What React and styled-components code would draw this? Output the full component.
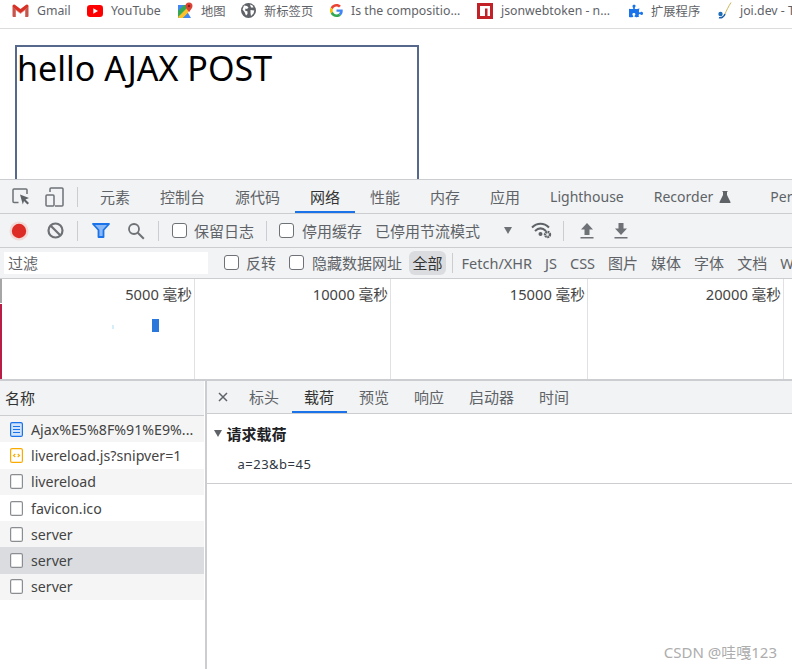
import React from 'react';
import styled, { createGlobalStyle } from 'styled-components';
import { FaPuzzlePiece } from 'react-icons/fa';

const GlobalStyle = createGlobalStyle`
    html, body {
        margin: 0;
        padding: 0;
        background: #fff;
        overflow: hidden;
    }
    * {
        box-sizing: border-box;
    }
`

const SANS = `"Noto Sans", "Noto Sans CJK SC", sans-serif`;

const Window = styled.div`
    width: 792px;
    height: 669px;
    display: flex;
    flex-direction: column;
    position: relative;
    overflow: hidden;
    font-family: ${SANS};
    color: #5f6368;
`

const BookmarkBar = styled.div`
    height: 29px;
    flex: none;
    display: flex;
    align-items: center;
    padding-bottom: 7px;
    border-bottom: 1px solid #dcdcdc;
    white-space: nowrap;
    overflow: hidden;
`

const Bookmark = styled.div`
    flex: none;
    width: ${props => props.$width}px;
    padding-left: ${props => props.$pad}px;
    display: flex;
    align-items: center;
    gap: 8px;
    font-size: 12.3px;
    color: #5f6368;

    svg {
        flex: none;
    }
`

const Page = styled.div`
    height: 150px;
    flex: none;
    padding: 16px 0 0 15px;
    overflow: hidden;
`

const DemoBox = styled.div`
    width: 404px;
    height: 220px;
    border: 2px solid #56688c;
    font-size: 34px;
    line-height: 42px;
    color: #000;
`

const Devtools = styled.div`
    flex: 1;
    min-height: 0;
    display: flex;
    flex-direction: column;
    border-top: 1px solid #cbcdd1;
`

const MainTabs = styled.div`
    height: 34px;
    flex: none;
    display: flex;
    align-items: stretch;
    background: #f1f3f4;
    border-bottom: 1px solid #cbcdd1;
    overflow: hidden;
`

const IconSlot = styled.div`
    flex: none;
    width: ${props => props.$width}px;
    padding-left: ${props => props.$pad || 0}px;
    display: flex;
    align-items: center;
    justify-content: center;
`

const Separator = styled.div`
    flex: none;
    width: 1px;
    height: ${props => props.$height || 20}px;
    background: #cbcdd1;
    margin: 0 ${props => props.$right || 0}px 0 ${props => props.$left || 0}px;
    align-self: center;
`

const MainTab = styled.div`
    flex: none;
    padding: 0 15px;
    display: flex;
    align-items: center;
    font-size: ${props => props.$latin ? 14 : 15}px;
    gap: 6px;
    white-space: nowrap;
    color: ${props => props.$active ? '#333' : '#5f6368'};
    box-shadow: ${props => props.$active ? 'inset 0 -2px 0 #1a73e8' : 'none'};
`

const ClippedTab = styled(MainTab)`
    margin-left: 9px;
    padding-right: 0;
`

const Toolbar = styled.div`
    height: 34px;
    flex: none;
    display: flex;
    align-items: center;
    background: #f1f3f4;
    border-bottom: 1px solid #cbcdd1;
    font-size: 15px;
    white-space: nowrap;
`

const FilterBar = styled(Toolbar)`
    height: 31px;
    padding-bottom: 1px;
    overflow: hidden;
`

const FilterInput = styled.div`
    flex: none;
    width: 204px;
    height: 22px;
    margin: 0 16px 0 4px;
    padding-left: 4px;
    display: flex;
    align-items: center;
    background: #fff;
    color: #5f6368;
`

const Check = styled.label`
    flex: none;
    display: flex;
    align-items: center;
    gap: ${props => props.$gap || 7}px;
    margin-left: ${props => props.$left || 0}px;
    margin-right: ${props => props.$right || 0}px;
`

const CheckBox = styled.span`
    flex: none;
    width: 15px;
    height: 15px;
    border: 1.5px solid #6e7175;
    border-radius: 3px;
    background: #fff;
`

const Chip = styled.div`
    flex: none;
    padding: 0 ${props => props.$active ? 3.5 : 6.5}px;
    height: 24px;
    display: flex;
    align-items: center;
    border-radius: 6px;
    font-size: ${props => props.$latin ? 14.5 : 15}px;
    background: ${props => props.$active ? '#dadce0' : 'transparent'};
    color: ${props => props.$active ? '#333' : '#5f6368'};

    &:last-child {
        padding-right: 0;
    }
`

const Overview = styled.div`
    height: 102px;
    flex: none;
    display: flex;
    position: relative;
    border-bottom: 2px solid #cbcdd1;
    padding-left: 2px;
`

const StripGray = styled.div`
    position: absolute;
    left: 0;
    top: 0;
    width: 2px;
    height: 24px;
    background: #a6a6a6;
`

const StripRed = styled.div`
    position: absolute;
    left: 0;
    top: 25px;
    width: 2px;
    height: 75px;
    background: #b81d45;
`

const TimeCell = styled.div`
    flex: none;
    width: ${props => props.$width}px;
    padding: 5px 2px 0 0;
    text-align: right;
    font-size: 14.7px;
    line-height: 20px;
    color: #444;
    border-right: 1px solid #dfe1e5;
`

const RequestMark = styled.div`
    position: absolute;
    left: ${props => props.$left}px;
    top: ${props => props.$top}px;
    width: ${props => props.$width}px;
    height: ${props => props.$height}px;
    background: ${props => props.$color};
`

const Panes = styled.div`
    flex: 1;
    min-height: 0;
    display: flex;
`

const NamePane = styled.div`
    flex: none;
    width: 206.5px;
    border-right: 2px solid #cbcdd1;
    padding-right: 0.5px;
`

const NameHeader = styled.div`
    height: 35px;
    display: flex;
    align-items: center;
    padding: 0 0 1px 5px;
    font-size: 15px;
    color: #333;
    background: #f1f3f4;
    border-bottom: 1px solid #cbcdd1;
`

const Row = styled.div`
    height: 26.3px;
    display: flex;
    align-items: center;
    gap: 8px;
    padding-left: 10px;
    font-size: 14.2px;
    color: #444;
    white-space: nowrap;
    background: ${props => props.$selected ? '#dadce0' : props.$striped ? '#f5f5f5' : '#fff'};

    svg {
        flex: none;
    }
`

const DetailPane = styled.div`
    flex: 1;
    min-width: 0;
`

const DetailTabs = styled.div`
    height: 33px;
    display: flex;
    align-items: stretch;
    background: #f1f3f4;
    border-bottom: 1px solid #cbcdd1;
`

const CloseButton = styled.div`
    flex: none;
    width: 30px;
    padding: 0 0 1px 2px;
    display: flex;
    align-items: center;
    justify-content: center;
`

const DetailTab = styled.div`
    flex: none;
    padding: 0 12.5px 2px;
    display: flex;
    align-items: center;
    font-size: 15px;
    white-space: nowrap;
    color: ${props => props.$active ? '#333' : '#5f6368'};
    box-shadow: ${props => props.$active ? 'inset 0 -2px 0 #1a73e8' : 'none'};
`

const PayloadSection = styled.div`
    height: 70px;
    padding-top: 9px;
    border-bottom: 1px solid #cbcdd1;
`

const SectionTitle = styled.div`
    display: flex;
    align-items: center;
    gap: 5px;
    height: 20px;
    padding-left: 7px;
    font-size: 15px;
    font-weight: 700;
    color: #202124;
`

const Triangle = styled.span`
    flex: none;
    width: 0;
    height: 0;
    border-left: 4.5px solid transparent;
    border-right: 4.5px solid transparent;
    border-top: 7px solid ${props => props.$color || '#5f6368'};
`

const PayloadValue = styled.div`
    margin: 11px 0 0 31px;
    font-size: 13px;
    line-height: 20px;
    letter-spacing: 0.5px;
    color: #303942;
`

const Watermark = styled.div`
    position: absolute;
    right: 15px;
    top: 642px;
    font-size: 15px;
    line-height: 20px;
    color: #adadad;
`

function GmailIcon() {
    return (
        <svg width="17" height="14" viewBox="0 0 17 14">
            <path d="M1 13V2.500L8.500 8 16 2.500V13h-3V6.500L8.500 10 4 6.500V13z" fill="#ea9a94" />
            <path d="M0.500 3V2a1.500 1.500 0 0 1 2.400-1.200L8.500 5l5.600-4.200A1.500 1.500 0 0 1 16.500 2v1L8.500 9z" fill="#d93025" />
            <path d="M0.500 3v9a1 1 0 0 0 1 1H3.500V5z" fill="#c5554d" />
            <path d="M16.500 3v9a1 1 0 0 1-1 1h-2V5z" fill="#c5554d" />
        </svg>
    )
}

function YoutubeIcon() {
    return (
        <svg width="16" height="12" viewBox="0 0 16 12">
            <rect width="16" height="12" rx="3.200" fill="#f00" />
            <path d="M6.300 3.300v5.400L11 6z" fill="#fff" />
        </svg>
    )
}

function MapsIcon() {
    return (
        <svg width="16" height="17" viewBox="0 0 16 17">
            <path d="M1 3h10v13H2a1 1 0 0 1-1-1z" fill="#35a853" />
            <path d="M1 15L11 5v6l-5 5H2z" fill="#fbc02d" />
            <path d="M6 16l5-5 3 5z" fill="#4285f4" />
            <path d="M1 3h6L1 9z" fill="#4285f4" />
            <path d="M12 0.500a3.500 3.500 0 0 1 3.500 3.500c0 2.400-2.500 4-3.500 6.500C11 8 8.500 6.400 8.500 4A3.500 3.500 0 0 1 12 .5z" fill="#db4437" />
            <circle cx="12" cy="4" r="1.300" fill="#8f2118" />
        </svg>
    )
}

function GlobeIcon() {
    return (
        <svg width="15" height="15" viewBox="0 0 15 15">
            <circle cx="7.500" cy="7.500" r="7.500" fill="#5f6368" />
            <path d="M3 2.500l3 .5 1.500 1.500L6 6 4.500 5.500 4 7.500l2.500 1L6.500 11 5 12.500 3.500 9 1.500 6.500zM9 1.500l2.500 1 1 2H10zM9.500 7l3.800.5-.8 3L10 13l-.5-3z" fill="#fff" />
        </svg>
    )
}

function GoogleIcon() {
    return (
        <svg width="13" height="13" viewBox="0 0 48 48">
            <path fill="#EA4335" d="M24 9.500c3.500 0 6.700 1.200 9.200 3.600l6.900-6.900C35.900 2.400 30.500 0 24 0 14.600 0 6.500 5.400 2.600 13.200l8 6.200C12.500 13.700 17.800 9.500 24 9.500z" />
            <path fill="#4285F4" d="M47 24.500c0-1.600-.1-3.100-.4-4.500H24v9h12.900c-.6 3-2.200 5.500-4.700 7.200l7.700 6C44.400 37.900 47 31.800 47 24.500z" />
            <path fill="#FBBC05" d="M10.500 28.600A14.500 14.500 0 0 1 10.500 19.400l-8-6.200a24 24 0 0 0 0 21.600z" />
            <path fill="#34A853" d="M24 48c6.500 0 11.900-2.100 15.900-5.800l-7.700-6c-2.200 1.400-4.900 2.300-8.200 2.300-6.200 0-11.500-4.200-13.400-9.900l-8 6.200C6.500 42.600 14.600 48 24 48z" />
        </svg>
    )
}

function NpmIcon() {
    return (
        <svg width="16" height="16" viewBox="0 0 16 16">
            <rect width="16" height="16" fill="#c12127" />
            <path d="M3 3h10v10h-2.500V5.500H8V13H3z" fill="#fff" />
        </svg>
    )
}

function JoiIcon() {
    return (
        <svg width="15" height="17" viewBox="0 0 15 17">
            <path d="M14 0.500C11.500 4.500 9.500 8.500 8 12" stroke="#c9b458" strokeWidth="1" fill="none" />
            <path d="M8 12C7 15 4 16.500 2 15.500" stroke="#1f5fa8" strokeWidth="1.500" fill="none" />
            <circle cx="3.500" cy="12" r="2.200" fill="#1f6fb8" />
        </svg>
    )
}

function InspectIcon() {
    return (
        <svg width="18" height="17" viewBox="0 0 18 17">
            <path d="M6.500 14.500H2a1 1 0 0 1-1-1V2a1 1 0 0 1 1-1h12a1 1 0 0 1 1 1v4" stroke="#6e7175" strokeWidth="1.500" fill="none" />
            <path d="M8 6.500l9 3.500-3.500 1.500L17 15l-1.500 1.500-3.500-3.500-1.200 3.500z" fill="#5f6368" />
        </svg>
    )
}

function DeviceIcon() {
    return (
        <svg width="19" height="20" viewBox="0 0 19 20">
            <path d="M5 5V2a1 1 0 0 1 1-1h11a1 1 0 0 1 1 1v16a1 1 0 0 1-1 1H10" stroke="#6e7175" strokeWidth="1.500" fill="none" />
            <rect x="1" y="8" width="8" height="11" rx="1" stroke="#6e7175" strokeWidth="1.500" fill="none" />
        </svg>
    )
}

function RecordIcon() {
    return (
        <svg width="20" height="20" viewBox="0 0 20 20">
            <circle cx="10" cy="10" r="9.500" fill="#f4c7c3" opacity="0.6" />
            <circle cx="10" cy="10" r="7.200" fill="#dd2c25" />
        </svg>
    )
}

function BlockIcon() {
    return (
        <svg width="17" height="17" viewBox="0 0 17 17">
            <circle cx="8.500" cy="8.500" r="7" stroke="#6e7175" strokeWidth="2.200" fill="none" />
            <path d="M3.500 3.500l10 10" stroke="#6e7175" strokeWidth="2.200" />
        </svg>
    )
}

function FilterIcon() {
    return (
        <svg width="18" height="15" viewBox="0 0 18 15">
            <path d="M1 1h16l-5.500 6v7h-5V7z" stroke="#1a73e8" strokeWidth="1.800" fill="#8ab8f5" strokeLinejoin="round" />
        </svg>
    )
}

function SearchIcon() {
    return (
        <svg width="18" height="18" viewBox="0 0 18 18">
            <circle cx="7" cy="7" r="5" stroke="#6e7175" strokeWidth="1.800" fill="none" />
            <path d="M10.800 10.800l6 6" stroke="#6e7175" strokeWidth="2" />
        </svg>
    )
}

function WifiGearIcon() {
    return (
        <svg width="21" height="17" viewBox="0 0 21 17">
            <path d="M1 5.500C6 0.500 13 0.500 18 5.500" stroke="#5f6368" strokeWidth="2" fill="none" />
            <path d="M4 9c3.500-3.300 7.500-3.300 11 0" stroke="#5f6368" strokeWidth="2" fill="none" />
            <circle cx="9.500" cy="12" r="2" fill="#5f6368" />
            <circle cx="16.500" cy="12.500" r="2.500" stroke="#5f6368" strokeWidth="2.400" fill="none" strokeDasharray="1.800 0.500" />
        </svg>
    )
}

function TransferIcon({ down }) {
    return (
        <svg width="14" height="16" viewBox="0 0 14 16">
            <path d={down ? 'M4.500 0h5v5.500H13L7 12 1 5.500h3.500z' : 'M7 0l6 6.500H9.500V12h-5V6.500H1z'} fill="#6e7175" />
            <rect x="0.500" y="14" width="13" height="1.500" fill="#6e7175" />
        </svg>
    )
}

function FlaskIcon() {
    return (
        <svg width="12" height="12" viewBox="0 0 12 12">
            <path d="M3.500 0h5v1H8v3l3.500 7a.7.7 0 0 1-.6 1H1.100a.7.7 0 0 1-.6-1L4 4V1h-.5z" fill="#5f6368" />
        </svg>
    )
}

function CloseIcon() {
    return (
        <svg width="10" height="10" viewBox="0 0 10 10">
            <path d="M1 1l8 8M9 1l-8 8" stroke="#5f6368" strokeWidth="1.500" />
        </svg>
    )
}

function FileIcon({ kind }) {
    if (kind === 'doc') {
        return (
            <svg width="13" height="15" viewBox="0 0 13 15">
                <rect x="0.600" y="0.600" width="11.800" height="13.800" rx="1.500" fill="#d2e3fc" stroke="#1a73e8" strokeWidth="1.200" />
                <path d="M3 4.500h7M3 7.500h7M3 10.500h7" stroke="#1a73e8" strokeWidth="1.200" />
            </svg>
        )
    }
    if (kind === 'script') {
        return (
            <svg width="13" height="15" viewBox="0 0 13 15">
                <rect x="0.600" y="0.600" width="11.800" height="13.800" rx="1.500" fill="#fff" stroke="#f9ab00" strokeWidth="1.200" />
                <path d="M5.300 6L3.500 7.500 5.300 9M7.700 6l1.800 1.500L7.700 9" stroke="#f9ab00" strokeWidth="1.100" fill="none" />
            </svg>
        )
    }
    return (
        <svg width="13" height="15" viewBox="0 0 13 15">
            <rect x="0.600" y="0.600" width="11.800" height="13.800" rx="1.500" fill="#fff" stroke="#8a8d91" strokeWidth="1.200" />
        </svg>
    )
}

const BOOKMARKS = [
    { label: 'Gmail', icon: <GmailIcon />, pad: 12, width: 74 },
    { label: 'YouTube', icon: <YoutubeIcon />, pad: 13, width: 90 },
    { label: '地图', icon: <MapsIcon />, pad: 13, width: 64 },
    { label: '新标签页', icon: <GlobeIcon />, pad: 13, width: 89 },
    { label: 'Is the compositio...', icon: <GoogleIcon />, pad: 13, width: 157 },
    { label: 'jsonwebtoken - n...', icon: <NpmIcon />, pad: 3, width: 152 },
    { label: '扩展程序', icon: <FaPuzzlePiece size={14} color="#1a73e8" />, pad: 3, width: 87 },
    { label: 'joi.dev - T', icon: <JoiIcon />, pad: 4, width: 79 },
]

const MAIN_TABS = ['元素', '控制台', '源代码', '网络', '性能', '内存', '应用']
const RESOURCE_TYPES = [
    { label: 'Fetch/XHR', latin: true },
    { label: 'JS', latin: true },
    { label: 'CSS', latin: true },
    { label: '图片' },
    { label: '媒体' },
    { label: '字体' },
    { label: '文档' },
    { label: 'W', latin: true },
]
const TIMES = [
    { label: '5000 毫秒', width: 193 },
    { label: '10000 毫秒', width: 196 },
    { label: '15000 毫秒', width: 197 },
    { label: '20000 毫秒', width: 196 },
]
const REQUESTS = [
    { name: 'Ajax%E5%8F%91%E9%...', kind: 'doc', striped: true },
    { name: 'livereload.js?snipver=1', kind: 'script' },
    { name: 'livereload', striped: true },
    { name: 'favicon.ico' },
    { name: 'server', striped: true },
    { name: 'server', selected: true },
    { name: 'server', striped: true },
]
const DETAIL_TABS = ['标头', '载荷', '预览', '响应', '启动器', '时间']

export default function App() {
    return (
        <Window>
            <GlobalStyle />
            <BookmarkBar>
                {BOOKMARKS.map(b => (
                    <Bookmark key={b.label} $pad={b.pad} $width={b.width}>
                        {b.icon}
                        <span>{b.label}</span>
                    </Bookmark>
                ))}
            </BookmarkBar>
            <Page>
                <DemoBox>hello AJAX POST</DemoBox>
            </Page>
            <Devtools>
                <MainTabs>
                    <IconSlot $width={42}><InspectIcon /></IconSlot>
                    <IconSlot $width={25}><DeviceIcon /></IconSlot>
                    <Separator $left={10} $right={7} />
                    {MAIN_TABS.map(tab => (
                        <MainTab key={tab} $active={tab === '网络'}>{tab}</MainTab>
                    ))}
                    <MainTab $latin>Lighthouse</MainTab>
                    <MainTab $latin>Recorder<FlaskIcon /></MainTab>
                    <ClippedTab $latin>Per</ClippedTab>
                </MainTabs>
                <Toolbar>
                    <IconSlot $width={38}><RecordIcon /></IconSlot>
                    <IconSlot $width={34}><BlockIcon /></IconSlot>
                    <Separator $left={5} />
                    <IconSlot $width={45}><FilterIcon /></IconSlot>
                    <IconSlot $width={25}><SearchIcon /></IconSlot>
                    <Separator $left={10} $right={13} />
                    <Check $right={12}><CheckBox />保留日志</Check>
                    <Separator />
                    <Check $left={12} $right={13} $gap={8}><CheckBox />停用缓存</Check>
                    <span>已停用节流模式</span>
                    <IconSlot $width={50} $pad={6}><Triangle $color="#6e7175" /></IconSlot>
                    <IconSlot $width={22}><WifiGearIcon /></IconSlot>
                    <Separator $left={11} $right={13} />
                    <IconSlot $width={20}><TransferIcon /></IconSlot>
                    <IconSlot $width={48}><TransferIcon down /></IconSlot>
                </Toolbar>
                <FilterBar>
                    <FilterInput>过滤</FilterInput>
                    <Check $right={13}><CheckBox />反转</Check>
                    <Check $right={7} $gap={8}><CheckBox />隐藏数据网址</Check>
                    <Chip $active>全部</Chip>
                    <Separator $left={6} $right={2} />
                    {RESOURCE_TYPES.map(type => <Chip key={type.label} $latin={type.latin}>{type.label}</Chip>)}
                </FilterBar>
                <Overview>
                    <StripGray />
                    <StripRed />
                    {TIMES.map(t => <TimeCell key={t.label} $width={t.width}>{t.label}</TimeCell>)}
                    <RequestMark $left={112} $top={46} $width={2} $height={4} $color="#d4eefa" />
                    <RequestMark $left={152} $top={40} $width={7} $height={13} $color="#2a78dc" />
                </Overview>
                <Panes>
                    <NamePane>
                        <NameHeader>名称</NameHeader>
                        {REQUESTS.map((r, i) => (
                            <Row key={i} $striped={r.striped} $selected={r.selected}>
                                <FileIcon kind={r.kind} />
                                <span>{r.name}</span>
                            </Row>
                        ))}
                    </NamePane>
                    <DetailPane>
                        <DetailTabs>
                            <CloseButton><CloseIcon /></CloseButton>
                            {DETAIL_TABS.map(tab => (
                                <DetailTab key={tab} $active={tab === '载荷'}>{tab}</DetailTab>
                            ))}
                        </DetailTabs>
                        <PayloadSection>
                            <SectionTitle><Triangle />请求载荷</SectionTitle>
                            <PayloadValue>a=23&amp;b=45</PayloadValue>
                        </PayloadSection>
                    </DetailPane>
                </Panes>
            </Devtools>
            <Watermark>CSDN @哇嘎123</Watermark>
        </Window>
    )
}
